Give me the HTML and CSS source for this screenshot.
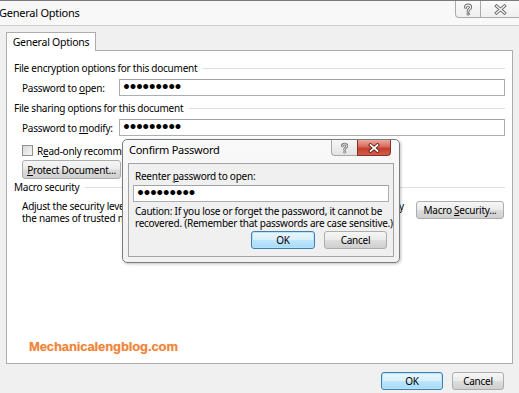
FILE: index.html
```html
<!DOCTYPE html>
<html lang="en">
<head>
<meta charset="utf-8">
<title>General Options</title>
<link rel="stylesheet" href="styles.css">
</head>
<body>
<div class="window">
  <header class="titlebar">
    <span class="title">General Options</span>
    <div class="caption">
      <span class="cap-btn cap-help">
        <svg width="10" height="13" viewBox="0 0 10 13"><g fill="none" stroke-linecap="round"><path d="M2.6 4.2 C2.6 1.4 7.6 1.4 7.6 4.2 C7.6 6.2 5.1 6.2 5.1 8.2" stroke="#6a6a6a" stroke-width="3"/><path d="M2.6 4.2 C2.6 1.4 7.6 1.4 7.6 4.2 C7.6 6.2 5.1 6.2 5.1 8.2" stroke="#fafafa" stroke-width="1.1"/><circle cx="5.1" cy="11" r="1.2" fill="#fafafa" stroke="#6a6a6a" stroke-width="0.9"/></g></svg>
      </span>
      <span class="cap-btn cap-close">
        <svg width="13" height="11" viewBox="0 0 13 11"><g stroke-linecap="square"><path d="M2.5 2 L10.5 9 M10.5 2 L2.5 9" stroke="#707070" stroke-width="3.2"/><path d="M2.5 2 L10.5 9 M10.5 2 L2.5 9" stroke="#f6f6f6" stroke-width="1.3"/></g></svg>
      </span>
    </div>
  </header>

  <main class="body">
    <div class="tabs"><div class="tab">General Options</div></div>
    <section class="panel">
      <div class="group-head first">File encryption options for this document</div>
      <div class="field-row">
        <label class="field-label">Password to <u>o</u>pen:</label>
        <div class="pw">•••••••••</div>
      </div>
      <div class="group-head second">File sharing options for this document</div>
      <div class="field-row">
        <label class="field-label">Password to <u>m</u>odify:</label>
        <div class="pw">•••••••••</div>
      </div>
      <div class="check-row">
        <span class="checkbox"></span>
        <span>R<u>e</u>ad-only recommended</span>
      </div>
      <div class="btn-row">
        <button class="btn protect"><u>P</u>rotect Document...</button>
      </div>
      <div class="group-head third">Macro security</div>
      <div class="macro-row">
        <p class="desc">Adjust the security level for opening files that might contain macro viruses and specify<br>the names of trusted macro developers.</p>
        <button class="btn macro">Macro <u>S</u>ecurity...</button>
      </div>
      <div class="watermark">Mechanicalengblog.com</div>
    </section>
    <footer class="actions">
      <button class="btn default ok-main">OK</button>
      <button class="btn cancel-main">Cancel</button>
    </footer>
  </main>

  <div class="confirm">
    <div class="confirm-titlebar">
      <span class="confirm-title">Confirm Password</span>
      <div class="confirm-caption">
        <span class="dlg-help">
          <svg width="9" height="12" viewBox="0 0 10 13"><g fill="none" stroke-linecap="round"><path d="M2.6 4.2 C2.6 1.4 7.6 1.4 7.6 4.2 C7.6 6.2 5.1 6.2 5.1 8.2" stroke="#7a7a7a" stroke-width="3"/><path d="M2.6 4.2 C2.6 1.4 7.6 1.4 7.6 4.2 C7.6 6.2 5.1 6.2 5.1 8.2" stroke="#f4f4f4" stroke-width="1.1"/><circle cx="5.1" cy="11" r="1.2" fill="#f4f4f4" stroke="#7a7a7a" stroke-width="0.9"/></g></svg>
        </span>
        <span class="dlg-close">
          <svg width="12" height="10" viewBox="0 0 12 10"><g stroke-linecap="square"><path d="M2.5 2 L9.5 8 M9.5 2 L2.5 8" stroke="#5b1a12" stroke-width="3.4"/><path d="M2.5 2 L9.5 8 M9.5 2 L2.5 8" stroke="#ffffff" stroke-width="1.7"/></g></svg>
        </span>
      </div>
    </div>
    <div class="confirm-body">
      <label class="confirm-label">Reenter <u>p</u>assword to open:</label>
      <div class="pw confirm-pw">•••••••••</div>
      <p class="caution">Caution: If you lose or forget the password, it cannot be<br>recovered. (Remember that passwords are case sensitive.)</p>
      <div class="confirm-actions">
        <button class="btn default ok-dlg">OK</button>
        <button class="btn cancel-dlg">Cancel</button>
      </div>
    </div>
  </div>
</div>
</body>
</html>
```

FILE: styles.css
```css
* { box-sizing: border-box; }
html, body { margin: 0; padding: 0; }
body {
  width: 519px;
  height: 393px;
  overflow: hidden;
  background: #f0f0f0;
  font-family: "Noto Sans", "Open Sans", sans-serif;
  font-size: 10px;
  letter-spacing: -0.25px;
  color: #000;
}
u { text-decoration: underline; text-underline-offset: 1px; }

.window {
  position: relative;
  height: 393px;
  display: flex;
  flex-direction: column;
}

/* title bar */
.titlebar {
  height: 26px;
  flex: none;
  border-top: 1px solid #7a7a7a;
  border-bottom: 1px solid #cfcfcf;
  background: #f8f8f8;
  display: flex;
  align-items: flex-start;
}
.title {
  margin-left: -1px;
  line-height: 24px;
  font-size: 11px;
}
.caption {
  margin-left: auto;
  display: flex;
}
.cap-btn {
  height: 17px;
  display: flex;
  align-items: center;
  justify-content: center;
  border: 1px solid #ababab;
  border-top: none;
  background: linear-gradient(#fbfbfb, #efefef);
}
.cap-help { width: 26px; border-radius: 0 0 0 4px; }
.cap-close { width: 40px; border-left: none; margin-right: -2px; }

/* body */
.body {
  flex: 1;
  display: flex;
  flex-direction: column;
  padding: 6px 6px 0 6px;
}
.tabs { display: flex; }
.tab {
  width: 90px;
  height: 19px;
  border: 1px solid #adadad;
  border-bottom: none;
  background: #fff;
  margin-bottom: -1px;
  position: relative;
  z-index: 1;
  text-align: center;
  line-height: 18px;
  font-size: 10.5px;
}
.panel {
  height: 314px;
  border: 1px solid #adadad;
  background: #fff;
  display: flex;
  flex-direction: column;
  padding: 0 7px;
}

.group-head {
  display: flex;
  align-items: center;
  gap: 6px;
  height: 15px;
  line-height: 15px;
  white-space: nowrap;
}
.group-head::after {
  content: "";
  flex: 1;
  border-top: 1px solid #dedede;
}
.group-head.first { margin-top: 10px; }
.group-head.second { margin-top: 5px; }
.group-head.third { margin-top: 1px; }

.field-row {
  display: flex;
  align-items: center;
  padding-left: 8px;
  margin-top: 3px;
}
.field-label { width: 97px; flex: none; }
.pw {
  flex: 1;
  height: 17px;
  border: 1px solid #abadb3;
  border-top-color: #a0a3aa;
  background: #fff;
  padding-left: 2px;
  font-family: "DejaVu Sans", sans-serif;
  font-size: 14px;
  font-weight: bold;
  letter-spacing: -2.5px;
  line-height: 15px;
  color: #000;
}

.check-row {
  display: flex;
  align-items: center;
  gap: 4px;
  height: 15px;
  padding-left: 8px;
  margin-top: 7px;
}
.checkbox {
  width: 11px;
  height: 11px;
  border: 1px solid #8e8f8f;
  background: linear-gradient(135deg, #d8d8d8, #f7f7f7);
}

.btn {
  font: inherit;
  letter-spacing: inherit;
  color: #000;
  padding: 0;
  border: 1px solid #adadad;
  border-radius: 3px;
  background: linear-gradient(#f6f6f6, #ebebeb 48%, #dddddd 52%, #cfcfcf);
  line-height: 1;
}
.btn.default {
  border-color: #3c7fb1;
  background: linear-gradient(#eaf6fd, #d9f0fc 48%, #bee6fd 52%, #a7d9f5);
  box-shadow: inset 0 0 0 1px #b9e4f8;
}
.btn-row { padding-left: 8px; margin-top: 2px; }
.protect { width: 99px; height: 19px; }

.macro-row {
  display: flex;
  align-items: flex-start;
  padding-left: 8px;
  margin-top: 5px;
}
.desc {
  margin: 0 8px 0 0;
  flex: 1;
  min-width: 0;
  line-height: 12px;
  white-space: nowrap;
  overflow: hidden;
}
.macro { width: 88px; height: 18px; margin-top: 1px; margin-right: 1px; flex: none; }

.watermark {
  margin-top: auto;
  margin-bottom: 9px;
  padding-left: 15px;
  font-family: "Liberation Sans", Arial, sans-serif;
  font-weight: bold;
  font-size: 13px;
  letter-spacing: -0.1px;
  line-height: 15px;
  color: #f0843a;
  text-shadow: 0 0 1px #f9c39c;
}

.actions {
  display: flex;
  justify-content: flex-end;
  gap: 9px;
  margin-top: 8px;
  padding-right: 9px;
}
.ok-main { width: 62px; height: 18px; }
.cancel-main { width: 52px; height: 18px; }

/* confirm dialog (overlay) */
.confirm {
  position: absolute;
  left: 122px;
  top: 139px;
  width: 278px;
  height: 124px;
  border: 1px solid #7c7c7c;
  border-radius: 5px;
  background: linear-gradient(#f9f9f9, #f1f1f1);
  box-shadow: 1px 1px 3px rgba(0, 0, 0, 0.25);
  padding: 0 5px 5px 5px;
  display: flex;
  flex-direction: column;
  z-index: 5;
}
.confirm-titlebar {
  height: 23px;
  flex: none;
  display: flex;
  align-items: flex-start;
}
.confirm-title {
  padding-left: 1px;
  line-height: 20px;
  font-size: 11px;
}
.confirm-caption {
  margin-left: auto;
  margin-right: 3px;
  display: flex;
}
.dlg-help,
.dlg-close {
  height: 16px;
  display: flex;
  align-items: center;
  justify-content: center;
}
.dlg-help {
  width: 26px;
  border: 1px solid #a8a8a8;
  border-top: none;
  border-right: none;
  border-radius: 0 0 0 4px;
  background: linear-gradient(#f7f7f7, #e3e3e3);
}
.dlg-close {
  width: 34px;
  border: 1px solid #8a3126;
  border-top: none;
  border-radius: 0 0 4px 0;
  background: linear-gradient(#eba99f, #d9695b 45%, #c53f2e 55%, #d05c4b);
}
.confirm-body {
  flex: 1;
  border: 1px solid #a3a3a3;
  background: #f0f0f0;
  padding: 6px 4px 0 4px;
  display: flex;
  flex-direction: column;
}
.confirm-label {
  padding-left: 2px;
  line-height: 12px;
}
.confirm-pw {
  flex: none;
  margin-top: 3px;
}
.caution {
  margin: 3px 0 0 0;
  padding-left: 2px;
  line-height: 12px;
  white-space: nowrap;
}
.confirm-actions {
  display: flex;
  justify-content: flex-end;
  gap: 9px;
  margin-top: 2px;
  padding-right: 2px;
}
.ok-dlg { width: 64px; height: 18px; }
.cancel-dlg { width: 63px; height: 18px; }
```
